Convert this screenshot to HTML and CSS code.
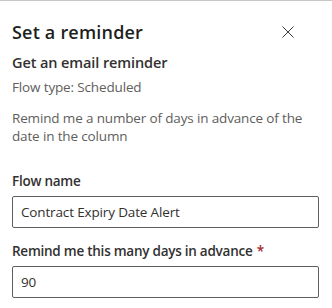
FILE: index.html
```html
<!DOCTYPE html>
<html lang="en">
<head>
<meta charset="utf-8">
<title>Set a reminder</title>
<link rel="stylesheet" href="styles.css">
</head>
<body>
<div class="panel">
  <div class="header">
    <h1 class="title">Set a reminder</h1>
    <button class="close" aria-label="Close">
      <svg width="12" height="12" viewBox="0 0 12 12" aria-hidden="true"><path d="M0.5 0.5 L11.5 11.5 M11.5 0.5 L0.5 11.5" stroke="#3b3a39" stroke-width="1" fill="none"/></svg>
    </button>
  </div>
  <div class="content">
    <h2 class="subtitle">Get an email reminder</h2>
    <p class="meta">Flow type: Scheduled</p>
    <p class="desc">Remind me a number of days in advance of the date in the column</p>
    <div class="field first">
      <label class="label" for="fn">Flow name</label>
      <input id="fn" class="input" type="text" value="Contract Expiry Date Alert">
    </div>
    <div class="field">
      <label class="label" for="days">Remind me this many days in advance <span class="req">*</span></label>
      <input id="days" class="input" type="text" value="90">
    </div>
  </div>
</div>
</body>
</html>
```
FILE: styles.css
```css
html, body {
  margin: 0;
  padding: 0;
  background: #ffffff;
}
body {
  font-family: "Open Sans", "Noto Sans", sans-serif;
  color: #323130;
}
.panel {
  border-top: 1px solid #c8c6c4;
  width: 332px;
  height: 307px;
  box-sizing: border-box;
}
.header {
  display: flex;
  justify-content: space-between;
  align-items: center;
  padding: 0 38px 0 12px;
  margin-top: 19px;
}
.title {
  margin: 0;
  font-size: 18px;
  line-height: 24px;
  font-weight: 600;
  letter-spacing: 0.2px;
  color: #201f1e;
}
.close {
  border: 0;
  background: none;
  padding: 0;
  width: 12px;
  height: 12px;
  display: flex;
  margin-top: -1px;
}
.content {
  padding: 0 13px 0 12px;
}
.subtitle {
  margin: 9px 0 0;
  font-size: 14.5px;
  line-height: 20px;
  font-weight: 600;
  letter-spacing: -0.1px;
  color: #323130;
}
.meta {
  margin: 4px 0 0;
  font-size: 13.5px;
  line-height: 20px;
  letter-spacing: -0.15px;
  color: #605e5c;
}
.desc {
  margin: 12px 0 0;
  font-size: 13.5px;
  line-height: 18px;
  letter-spacing: -0.15px;
  color: #605e5c;
}
.field {
  margin-top: 13px;
}
.field.first {
  margin-top: 26px;
}
.label {
  display: block;
  font-size: 13.5px;
  line-height: 20px;
  font-weight: 600;
  letter-spacing: -0.25px;
  margin-bottom: 5px;
  color: #323130;
}
.req {
  color: #a4262c;
  margin-left: 1px;
}
.input {
  display: block;
  box-sizing: border-box;
  width: 100%;
  height: 32px;
  margin: 0;
  padding: 0 8px;
  border: 1px solid #605e5c;
  border-radius: 2px;
  font-family: inherit;
  font-size: 13.5px;
  letter-spacing: -0.15px;
  color: #323130;
  background: #fff;
  outline: none;
}
```
